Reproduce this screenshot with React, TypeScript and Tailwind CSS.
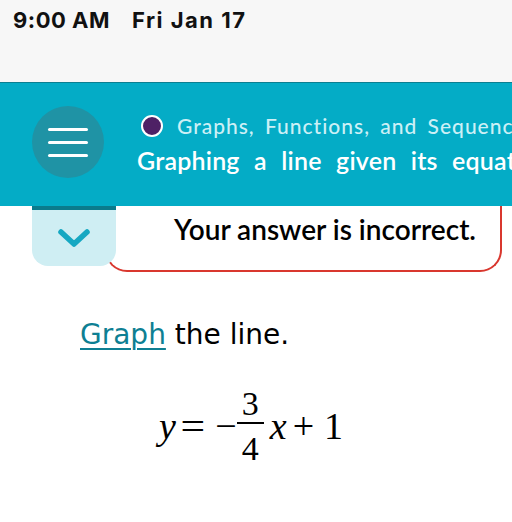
import React from "react";

export default function App() {
  return (
    <div className="w-[512px] h-[522px] overflow-hidden bg-white relative">
      {/* status bar */}
      <div className="h-[82px] bg-[#f7f7f7] px-[13px] pt-[5px] flex text-[22px] font-bold text-[#111] leading-[30px]" style={{ fontFamily: "Inter, 'Liberation Sans', sans-serif" }}>
        <span className="tracking-[0.5px]">9:00 AM</span>
        <span className="ml-[22px] tracking-[1.5px]">Fri Jan 17</span>
      </div>
      {/* header */}
      <div className="h-[124px] bg-[#04acc6] border-t border-[#0b7f91] flex items-start relative z-20" style={{ fontFamily: "Lato, 'Noto Sans', sans-serif" }}>
        <div className="ml-[32px] mt-[23px] w-[72px] h-[72px] rounded-full bg-[#1f93a5] flex flex-col items-center justify-center gap-[10px] shrink-0">
          <div className="w-[40px] h-[3px] rounded-full bg-white" />
          <div className="w-[40px] h-[3px] rounded-full bg-white" />
          <div className="w-[40px] h-[3px] rounded-full bg-white" />
        </div>
        <div className="ml-[33px] mt-[30px] flex flex-col whitespace-nowrap">
          <div className="flex items-center h-[26px]">
            <div className="ml-[4px] w-[22px] h-[22px] rounded-full bg-[#4e2165] border-2 border-white shrink-0" />
            <span className="ml-[14px] text-[21px] text-[#cdf0f6] font-medium leading-[26px] tracking-[1px] [word-spacing:4px]">Graphs, Functions, and Sequences</span>
          </div>
          <div className="mt-[6px] text-[25px] text-white font-semibold leading-[30px] tracking-[0.2px] [word-spacing:8px]">Graphing a line given its equation</div>
        </div>
      </div>
      {/* feedback row */}
      <div className="flex items-start" style={{ fontFamily: "Lato, 'Noto Sans', sans-serif" }}>
        <div className="relative z-10 ml-[32px] w-[84px] h-[60px] bg-[#cfeef3] border-t-[4px] border-[#0a7b8c] rounded-b-[16px] flex items-center justify-center shrink-0">
          <svg width="34" height="22" viewBox="0 0 34 22">
            <path d="M4 5 L17 17 L30 5" fill="none" stroke="#16a8c2" strokeWidth="5.5" strokeLinecap="round" strokeLinejoin="round" />
          </svg>
        </div>
        <div className="-ml-[11px] w-[397px] h-[66px] border-2 border-t-0 border-[#d9372e] rounded-b-[22px] pl-[67px] pt-[5px] text-[28px] leading-[36px] font-semibold text-black whitespace-nowrap">
          Your answer is incorrect.
        </div>
      </div>
      {/* question */}
      <div className="pl-[80px] pt-[46px] text-[28px] text-black leading-[34px]" style={{ fontFamily: "'DejaVu Sans', Verdana, sans-serif" }}>
        <span className="text-[#0e7f93] underline underline-offset-[4px] decoration-[2px]">Graph</span> the line.
      </div>
      <div className="pl-[159px] pt-[35px] flex items-center text-[38px] leading-[38px] text-black" style={{ fontFamily: "'Liberation Serif', 'Times New Roman', serif" }}>
        <span className="italic pb-[2px]">y</span>
        <span className="ml-[6px] pb-[2px] inline-block scale-x-[1.15]">=</span>
        <span className="ml-[12px] pb-[2px]">−</span>
        <span className="ml-[0px] inline-flex flex-col items-center">
          <span className="text-[34px] leading-[34px] mb-[1px]">3</span>
          <span className="w-[27px] h-[2px] bg-black" />
          <span className="text-[34px] leading-[34px] mt-[8px]">4</span>
        </span>
        <span className="italic ml-[6px] pb-[2px]">x</span>
        <span className="ml-[6px] pb-[2px]">+</span>
        <span className="ml-[10px] pb-[2px]">1</span>
      </div>
    </div>
  );
}
